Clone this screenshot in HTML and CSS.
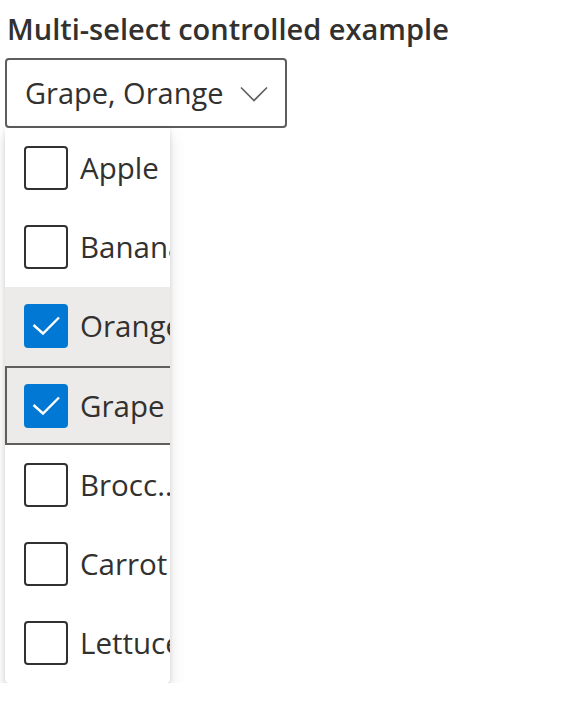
FILE: index.html
```html
<!DOCTYPE html>
<html lang="en">
<head>
<meta charset="utf-8">
<title>Multi-select controlled example</title>
<link rel="stylesheet" href="styles.css">
</head>
<body>
<div class="page">
  <label class="label">Multi-select controlled example</label>
  <div class="dropdown">
    <span class="dropdown-title">Grape, Orange</span>
    <svg class="chevron" width="28" height="16" viewBox="0 0 28 16"><polyline points="1,1.5 14,14.5 27,1.5" fill="none" stroke="#605e5c" stroke-width="1.6"/></svg>
  </div>
  <div class="callout">
    <div class="option"><span class="box"></span><span class="text">Apple</span></div>
    <div class="option"><span class="box"></span><span class="text">Banana</span></div>
    <div class="option selected"><span class="box checked"><svg viewBox="0 0 44 44" width="44" height="44"><polyline points="9.5,21 19,29.5 35,13.5" fill="none" stroke="#fff" stroke-width="2.4"/></svg></span><span class="text">Orange</span></div>
    <div class="option selected focused"><span class="box checked"><svg viewBox="0 0 44 44" width="44" height="44"><polyline points="9.5,21 19,29.5 35,13.5" fill="none" stroke="#fff" stroke-width="2.4"/></svg></span><span class="text">Grape</span></div>
    <div class="option"><span class="box"></span><span class="text ellipsis">Broccoli</span></div>
    <div class="option"><span class="box"></span><span class="text">Carrot</span></div>
    <div class="option"><span class="box"></span><span class="text">Lettuce</span></div>
  </div>
</div>
</body>
</html>
```

FILE: styles.css
```css
html, body {
  margin: 0;
  padding: 0;
  background: #ffffff;
}

body {
  font-family: "Open Sans", "Noto Sans", sans-serif;
  color: #323130;
}

.page {
  padding-left: 5px;
}

.label {
  display: block;
  font-size: 29px;
  font-weight: 600;
  line-height: 44px;
  padding: 7px 0 7px 2px;
  color: #323130;
}

.dropdown {
  box-sizing: border-box;
  width: 282px;
  height: 70px;
  border: 2px solid #605e5c;
  border-radius: 4px;
  display: flex;
  align-items: center;
  padding-left: 18px;
}

.dropdown-title {
  flex: 1;
  font-size: 29px;
  line-height: 66px;
  white-space: nowrap;
}

.chevron {
  display: block;
  margin-right: 17px;
  margin-top: 1px;
}

.callout {
  width: 165px;
  background: #ffffff;
  border-radius: 0 0 4px 4px;
  box-shadow: 0 7px 16px rgba(0, 0, 0, 0.13), 0 1.3px 4px rgba(0, 0, 0, 0.11);
  overflow: hidden;
}

.option {
  box-sizing: border-box;
  width: 282px;
  height: 79.3px;
  display: flex;
  align-items: center;
  padding-left: 19px;
  white-space: nowrap;
}

.option.selected {
  background: #edebe9;
}

.option.focused {
  box-shadow: inset 0 0 0 2px #605e5c;
}

.box {
  box-sizing: border-box;
  flex: none;
  width: 44px;
  height: 44px;
  border: 2px solid #323130;
  border-radius: 4px;
  margin-right: 12px;
  display: flex;
  align-items: center;
  justify-content: center;
}

.box.checked {
  background: #0078d4;
  border-color: #0078d4;
}

.box svg {
  display: block;
  flex: none;
}

.text {
  font-size: 29.5px;
  line-height: 40px;
  color: #323130;
}

.ellipsis {
  display: block;
  max-width: 104px;
  overflow: hidden;
  text-overflow: ellipsis;
}
```
